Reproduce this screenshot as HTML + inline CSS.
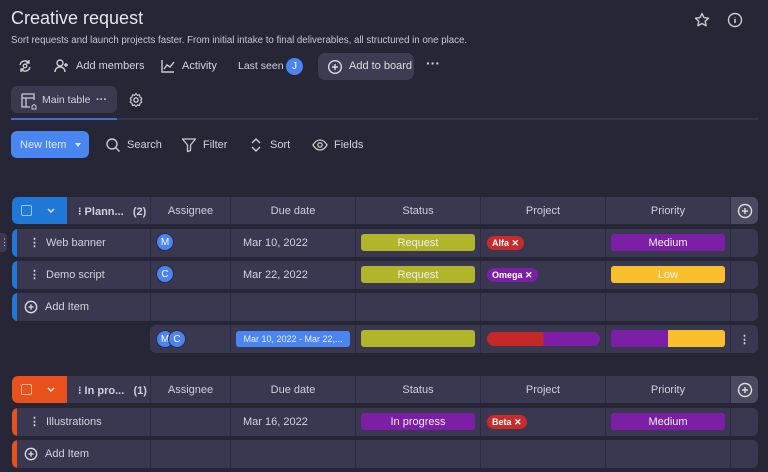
<!DOCTYPE html>
<html><head><style>
*{box-sizing:border-box;margin:0;padding:0}
body{width:768px;height:472px;background:#262637;font-family:"Liberation Sans",sans-serif;color:#d4d4de;position:relative;overflow:hidden;font-size:11px}
.a{position:absolute}
.row{position:absolute;left:12px;width:746px;height:28px;background:#393850;border-radius:6px;overflow:hidden}
.c{position:absolute;top:0;height:100%;border-left:1px solid #2d2c42;display:flex;align-items:center;justify-content:center}
.pill{position:absolute;height:17px;border-radius:3px;display:flex;align-items:center;justify-content:center;color:#eee;font-size:11px}
.tag{position:absolute;height:14px;border-radius:7px;font-size:9px;font-weight:bold;color:#fff;display:flex;align-items:center;padding:0 5px}
.av{position:absolute;width:18px;height:18px;border-radius:50%;background:#4a84f0;color:#fff;font-size:10px;display:flex;align-items:center;justify-content:center;border:1px solid #2c2c44}
.acc{position:absolute;left:0;top:0;width:5px;height:100%}
.hd{font-size:11px;color:#d0d0da}
svg{position:absolute}
</style></head><body>
<div class="a" style="left:11px;top:8px;font-size:18px;color:#e6e6ee">Creative request</div>
<div class="a" style="left:11px;top:35px;font-size:9.7px;color:#c8c8d2">Sort requests and launch projects faster. From initial intake to final deliverables, all structured in one place.</div>
<svg style="left:694px;top:12px" width="16" height="16" viewBox="0 0 16 16"><path d="M8 1.5l2 4.2 4.5.5-3.3 3.1.9 4.5L8 11.5l-4.1 2.3.9-4.5L1.5 6.2 6 5.7z" fill="none" stroke="#ccc" stroke-width="1.4" stroke-linejoin="round"/></svg>
<svg style="left:727px;top:12px" width="16" height="16" viewBox="0 0 16 16"><circle cx="8" cy="8" r="6.5" fill="none" stroke="#ccc" stroke-width="1.4"/><path d="M8 7v4M8 5v.5" stroke="#ccc" stroke-width="1.6"/></svg>
<svg style="left:17px;top:58px" width="16" height="16" viewBox="0 0 16 16"><path d="M3 7a5 5 0 0 1 9-2M13 9a5 5 0 0 1-9 2M12 2v3h-3M4 14v-3h3" fill="none" stroke="#ccc" stroke-width="1.4"/><circle cx="8" cy="8" r="1.8" fill="none" stroke="#ccc" stroke-width="1.3"/></svg>
<svg style="left:54px;top:58px" width="16" height="16" viewBox="0 0 16 16"><circle cx="6" cy="5" r="3" fill="none" stroke="#ccc" stroke-width="1.4"/><path d="M1 14c0-3 2-5 5-5s5 2 5 5M12 5v4M10 7h4" fill="none" stroke="#ccc" stroke-width="1.4"/></svg>
<div class="a" style="left:76px;top:60px;font-size:11px">Add members</div>
<svg style="left:160px;top:58px" width="16" height="16" viewBox="0 0 16 16"><path d="M2 2v12h12M4 11l3-4 3 2 4-5" fill="none" stroke="#ccc" stroke-width="1.4"/></svg>
<div class="a" style="left:182px;top:60px">Activity</div>
<div class="a" style="left:238px;top:60px;font-size:10.5px">Last seen</div>
<div class="av" style="left:286px;top:58px;border:none;width:17px;height:17px">J</div>
<div class="a" style="left:318px;top:53px;width:96px;height:27px;background:#3d3c52;border-radius:7px"></div>
<svg style="left:327px;top:59px" width="16" height="16" viewBox="0 0 16 16"><circle cx="8" cy="8" r="6.3" fill="none" stroke="#ddd" stroke-width="1.4"/><path d="M8 5v6M5 8h6" stroke="#ddd" stroke-width="1.4"/></svg>
<div class="a" style="left:349px;top:60px;color:#ddd">Add to board</div>
<div class="a" style="left:426px;top:58px;font-size:14px;font-weight:bold;line-height:10px">···</div>
<div class="a" style="left:11px;top:86px;width:106px;height:27px;background:#3a394f;border-radius:6px"></div>
<svg style="left:20px;top:92px" width="18" height="18" viewBox="0 0 18 18"><path d="M2 2h12v6M2 2v13h8M2 6h12M6 6v9" fill="none" stroke="#ccc" stroke-width="1.3"/><path d="M12 17v-3l2-1.5 2 1.5v3z" fill="none" stroke="#ccc" stroke-width="1"/></svg>
<div class="a" style="left:42px;top:94px;font-size:10.5px">Main table</div>
<div class="a" style="left:96px;top:95px;font-weight:bold;line-height:10px">···</div>
<svg style="left:128px;top:92px" width="16" height="16" viewBox="0 0 16 16"><circle cx="8" cy="8" r="2.2" fill="none" stroke="#ccc" stroke-width="1.3"/><path d="M8 1.5l1.3 1.8 2.2-.5.5 2.2 1.8 1.3-1 2 1 1.7-1.8 1.3-.5 2.2-2.2-.5L8 14.5 6.7 13l-2.2.5-.5-2.2L2.2 10l1-2-1-1.7L4 5l.5-2.2 2.2.5z" fill="none" stroke="#ccc" stroke-width="1.2" stroke-linejoin="round"/></svg>
<div class="a" style="left:11px;top:118px;width:747px;height:2px;background:#35344a"></div>
<div class="a" style="left:11px;top:118px;width:106px;height:2px;background:#3e6fd0"></div>
<div class="a" style="left:11px;top:131px;width:78px;height:27px;background:#4a86f2;border-radius:6px"></div>
<div class="a" style="left:20px;top:139px;color:#dfe9ff">New Item</div>
<div class="a" style="left:75px;top:143px;width:0;height:0;border-left:3.5px solid transparent;border-right:3.5px solid transparent;border-top:4px solid #dfe9ff"></div>
<svg style="left:105px;top:137px" width="16" height="16" viewBox="0 0 16 16"><circle cx="7" cy="7" r="5" fill="none" stroke="#ccc" stroke-width="1.4"/><path d="M10.5 10.5l4 4" stroke="#ccc" stroke-width="1.4"/></svg>
<div class="a" style="left:127px;top:139px">Search</div>
<svg style="left:181px;top:137px" width="16" height="16" viewBox="0 0 16 16"><path d="M1.5 2h13L9.5 8v5.5l-3 1V8z" fill="none" stroke="#ccc" stroke-width="1.3" stroke-linejoin="round"/></svg>
<div class="a" style="left:203px;top:139px">Filter</div>
<svg style="left:250px;top:137px" width="12" height="16" viewBox="0 0 12 16"><path d="M2 6l4-4 4 4M2 10l4 4 4-4" fill="none" stroke="#ccc" stroke-width="1.4"/></svg>
<div class="a" style="left:270px;top:139px">Sort</div>
<svg style="left:312px;top:137px" width="16" height="16" viewBox="0 0 16 16"><path d="M1 8c2-3.5 4.5-5 7-5s5 1.5 7 5c-2 3.5-4.5 5-7 5s-5-1.5-7-5z" fill="none" stroke="#ccc" stroke-width="1.3"/><circle cx="8" cy="8" r="2.2" fill="none" stroke="#ccc" stroke-width="1.3"/></svg>
<div class="a" style="left:334px;top:139px">Fields</div>

<div class="a" style="left:0;top:233px;width:7px;height:19px;background:#3a394f;border-radius:0 4px 4px 0;color:#ccc;font-size:9px;line-height:19px">⋮</div>

<div class="row" style="top:197px;height:27px">
 <div class="a" style="left:0;top:0;width:55px;height:100%;background:#1f78d6"></div>
 <div class="a" style="left:9px;top:8px;width:11px;height:11px;border:1.5px solid #9cc4ef;border-radius:2px"></div>
 <svg style="left:34px;top:10px" width="10" height="8" viewBox="0 0 10 8"><path d="M2 2l3 3 3-3" fill="none" stroke="#dde" stroke-width="1.5"/></svg>
 <div class="a hd" style="left:66px;top:8px;font-weight:bold">⁝ Plann...&nbsp;&nbsp;&nbsp;(2)</div>
 <div class="c hd" style="left:138px;width:80px">Assignee</div>
 <div class="c hd" style="left:218px;width:125px">Due date</div>
 <div class="c hd" style="left:343px;width:125px">Status</div>
 <div class="c hd" style="left:468px;width:125px">Project</div>
 <div class="c hd" style="left:593px;width:125px">Priority</div>
 <div class="c" style="left:718px;width:28px;background:#4a495f"><svg style="left:6px;top:6px" width="16" height="16" viewBox="0 0 16 16"><circle cx="8" cy="8" r="6.5" fill="none" stroke="#ddd" stroke-width="1.4"/><path d="M8 5v6M5 8h6" stroke="#ddd" stroke-width="1.4"/></svg></div>
</div>
<div class="row" style="top:229px">
 <div class="acc" style="background:#1f78d6"></div>
 <div class="a" style="left:17px;top:7px;font-weight:bold">⋮</div>
 <div class="a" style="left:34px;top:8px">Web banner</div>
 <div class="c" style="left:138px;width:80px"></div><div class="av" style="left:144px;top:4px">M</div>
 <div class="c" style="left:218px;width:125px;justify-content:flex-start;padding-left:12px">Mar 10, 2022</div>
 <div class="c" style="left:343px;width:125px"></div><div class="pill" style="left:349px;top:5px;width:114px;background:#b0b52a">Request</div>
 <div class="c" style="left:468px;width:125px"></div><div class="tag" style="left:475px;top:7px;background:#c92a2a">Alfa ✕</div>
 <div class="c" style="left:593px;width:125px"></div><div class="pill" style="left:599px;top:5px;width:114px;background:#7d1fa6">Medium</div>
 <div class="c" style="left:718px;width:28px"></div>
</div>
<div class="row" style="top:261px">
 <div class="acc" style="background:#1f78d6"></div>
 <div class="a" style="left:17px;top:7px;font-weight:bold">⋮</div>
 <div class="a" style="left:34px;top:8px">Demo script</div>
 <div class="c" style="left:138px;width:80px"></div><div class="av" style="left:144px;top:4px">C</div>
 <div class="c" style="left:218px;width:125px;justify-content:flex-start;padding-left:12px">Mar 22, 2022</div>
 <div class="c" style="left:343px;width:125px"></div><div class="pill" style="left:349px;top:5px;width:114px;background:#b0b52a">Request</div>
 <div class="c" style="left:468px;width:125px"></div><div class="tag" style="left:475px;top:7px;background:#7d1fa6">Omega ✕</div>
 <div class="c" style="left:593px;width:125px"></div><div class="pill" style="left:599px;top:5px;width:114px;background:#f8bf2c">Low</div>
 <div class="c" style="left:718px;width:28px"></div>
</div>
<div class="row" style="top:293px">
 <div class="acc" style="background:#1f78d6"></div>
 <svg style="left:12px;top:7px" width="14" height="14" viewBox="0 0 16 16"><circle cx="8" cy="8" r="6.5" fill="none" stroke="#ddd" stroke-width="1.5"/><path d="M8 5v6M5 8h6" stroke="#ddd" stroke-width="1.5"/></svg>
 <div class="a" style="left:33px;top:8px">Add Item</div>
 <div class="c" style="left:138px;width:80px"></div><div class="c" style="left:218px;width:125px"></div><div class="c" style="left:343px;width:125px"></div><div class="c" style="left:468px;width:125px"></div><div class="c" style="left:593px;width:125px"></div><div class="c" style="left:718px;width:28px"></div>
</div>
<div class="row" style="top:325px;left:150px;width:608px">
 <div class="av" style="left:6px;top:5px">M</div><div class="av" style="left:18px;top:5px">C</div>
 <div class="c" style="left:80px;width:125px"></div><div class="pill" style="left:86px;top:6px;width:114px;height:16px;background:#4a86f2;font-size:9px;color:#e8efff">Mar 10, 2022 - Mar 22,...</div>
 <div class="c" style="left:205px;width:125px"></div><div class="pill" style="left:211px;top:5px;width:114px;background:#b0b52a"></div>
 <div class="c" style="left:330px;width:125px"></div><div class="pill" style="left:337px;top:7px;width:113px;height:14px;border-radius:7px;overflow:hidden;background:linear-gradient(90deg,#c42828 50%,#7d1fa6 50%)"></div>
 <div class="c" style="left:455px;width:125px"></div><div class="pill" style="left:461px;top:5px;width:114px;background:linear-gradient(90deg,#7d1fa6 50%,#f8bf2c 50%)"></div>
 <div class="c" style="left:580px;width:28px;font-weight:bold">⋮</div>
</div>

<div class="row" style="top:376px;height:27px">
 <div class="a" style="left:0;top:0;width:55px;height:100%;background:#e8511c"></div>
 <div class="a" style="left:9px;top:8px;width:11px;height:11px;border:1.5px solid #f5b89f;border-radius:2px"></div>
 <svg style="left:34px;top:10px" width="10" height="8" viewBox="0 0 10 8"><path d="M2 2l3 3 3-3" fill="none" stroke="#fee" stroke-width="1.5"/></svg>
 <div class="a hd" style="left:66px;top:8px;font-weight:bold">⁝ In pro...&nbsp;&nbsp;&nbsp;(1)</div>
 <div class="c hd" style="left:138px;width:80px">Assignee</div>
 <div class="c hd" style="left:218px;width:125px">Due date</div>
 <div class="c hd" style="left:343px;width:125px">Status</div>
 <div class="c hd" style="left:468px;width:125px">Project</div>
 <div class="c hd" style="left:593px;width:125px">Priority</div>
 <div class="c" style="left:718px;width:28px;background:#4a495f"><svg style="left:6px;top:6px" width="16" height="16" viewBox="0 0 16 16"><circle cx="8" cy="8" r="6.5" fill="none" stroke="#ddd" stroke-width="1.4"/><path d="M8 5v6M5 8h6" stroke="#ddd" stroke-width="1.4"/></svg></div>
</div>
<div class="row" style="top:408px">
 <div class="acc" style="background:#e8511c"></div>
 <div class="a" style="left:17px;top:7px;font-weight:bold">⋮</div>
 <div class="a" style="left:34px;top:8px">Illustrations</div>
 <div class="c" style="left:138px;width:80px"></div>
 <div class="c" style="left:218px;width:125px;justify-content:flex-start;padding-left:12px">Mar 16, 2022</div>
 <div class="c" style="left:343px;width:125px"></div><div class="pill" style="left:349px;top:5px;width:114px;background:#7d1fa6">In progress</div>
 <div class="c" style="left:468px;width:125px"></div><div class="tag" style="left:475px;top:7px;background:#c92a2a">Beta ✕</div>
 <div class="c" style="left:593px;width:125px"></div><div class="pill" style="left:599px;top:5px;width:114px;background:#7d1fa6">Medium</div>
 <div class="c" style="left:718px;width:28px"></div>
</div>
<div class="row" style="top:440px">
 <div class="acc" style="background:#e8511c"></div>
 <svg style="left:12px;top:7px" width="14" height="14" viewBox="0 0 16 16"><circle cx="8" cy="8" r="6.5" fill="none" stroke="#ddd" stroke-width="1.5"/><path d="M8 5v6M5 8h6" stroke="#ddd" stroke-width="1.5"/></svg>
 <div class="a" style="left:33px;top:8px">Add Item</div>
 <div class="c" style="left:138px;width:80px"></div><div class="c" style="left:218px;width:125px"></div><div class="c" style="left:343px;width:125px"></div><div class="c" style="left:468px;width:125px"></div><div class="c" style="left:593px;width:125px"></div><div class="c" style="left:718px;width:28px"></div>
</div>
</body></html>
